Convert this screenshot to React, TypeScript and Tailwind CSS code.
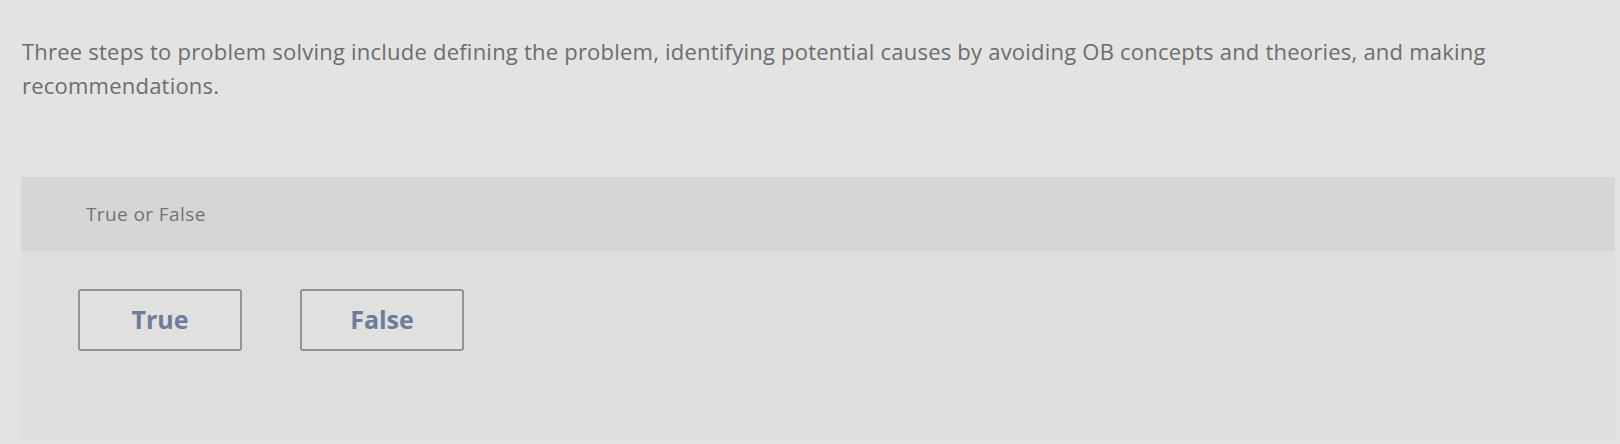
export default function App() {
  return (
    <div className="h-[444px] w-[1620px] overflow-hidden bg-[#e3e3e1] font-['Open_Sans','Noto_Sans',sans-serif]">
      {/* Question */}
      <div className="pl-[22px] pr-[100px] pt-[34px]">
        <p className="text-[22px] leading-[34px] tracking-[0.22px] text-[#6c6d70]">
          Three steps to problem solving include defining the problem, identifying potential causes by avoiding OB concepts and theories, and making recommendations.
        </p>
      </div>

      {/* Answer panel */}
      <div className="ml-[21px] mt-[75px] w-[1594px] bg-[#dededc]">
        <div className="flex h-[74px] items-center bg-[#d6d6d4] pl-[65px]">
          <span className="text-[19px] tracking-[0.4px] text-[#727376]">True or False</span>
        </div>
        <div className="flex gap-[58px] pl-[57px] pt-[38px] pb-[89px]">
          <AnswerButton label="True" />
          <AnswerButton label="False" />
        </div>
      </div>
    </div>
  );
}

function AnswerButton({ label }: { label: string }) {
  return (
    <button className="flex h-[62px] w-[164px] items-center justify-center rounded-[3px] border-2 border-[#8f93a0] bg-[#e0e0de] text-[25px] font-bold text-[#6d7c9a]">
      {label}
    </button>
  );
}
